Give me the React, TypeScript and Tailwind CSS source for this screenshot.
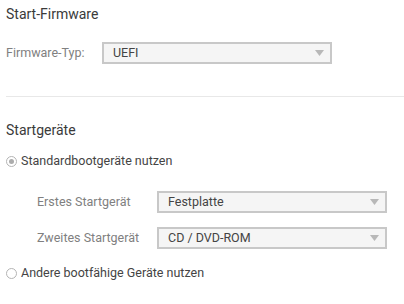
import { useState } from 'react';

const font = { fontFamily: 'Roboto, "Noto Sans", sans-serif' };

function Select({ value, className }: { value: string; className: string }) {
  return (
    <div className={`flex items-center justify-between h-[22px] border-2 border-[#c8c8c8] bg-[#f5f5f5] pl-[9px] pr-[6px] ${className}`}>
      <span className="text-[12.5px] leading-[16px] text-[#444]">{value}</span>
      <svg width="9" height="6" viewBox="0 0 9 6">
        <path d="M0 0h9L4.5 6z" fill="#b8b8b8" />
      </svg>
    </div>
  );
}

function Radio({ checked }: { checked: boolean }) {
  return (
    <span className="flex items-center justify-center w-[11px] h-[11px] rounded-full border border-[#b4b4b4] bg-white">
      {checked && <span className="w-[5px] h-[5px] rounded-full bg-[#acacac]" />}
    </span>
  );
}

export default function App() {
  const [mode] = useState('standard');

  return (
    <div className="w-[404px] h-[304px] bg-white overflow-hidden" style={font}>
      <div className="pl-[6px] pt-[5px]">
        <h2 className="text-[14px] text-[#3a3a3a] leading-[18px]">Start-Firmware</h2>
        <div className="flex items-center mt-[19px]">
          <span className="w-[96px] text-[12.5px] leading-[16px] text-[#808080]">Firmware-Typ:</span>
          <Select value="UEFI" className="w-[230px]" />
        </div>
      </div>

      <div className="ml-[6px] mt-[32px] h-px bg-[#e8e8e8]" />

      <div className="pl-[6px] pt-[24px]">
        <h2 className="text-[14px] text-[#3a3a3a] leading-[18px]">Startgeräte</h2>
        <label className="flex items-center gap-[4px] mt-[14px]">
          <Radio checked={mode === 'standard'} />
          <span className="text-[12.5px] leading-[16px] text-[#444]">Standardbootgeräte nutzen</span>
        </label>

        <div className="pl-[31px] mt-[22px] flex flex-col gap-[14px]">
          <div className="flex items-center">
            <span className="w-[120px] text-[12.5px] leading-[16px] text-[#808080]">Erstes Startgerät</span>
            <Select value="Festplatte" className="w-[230px]" />
          </div>
          <div className="flex items-center">
            <span className="w-[120px] text-[12.5px] leading-[16px] text-[#808080]">Zweites Startgerät</span>
            <Select value="CD / DVD-ROM" className="w-[230px]" />
          </div>
        </div>

        <label className="flex items-center gap-[4px] mt-[16px]">
          <Radio checked={mode === 'other'} />
          <span className="text-[12.5px] leading-[16px] text-[#444]">Andere bootfähige Geräte nutzen</span>
        </label>
      </div>
    </div>
  );
}
